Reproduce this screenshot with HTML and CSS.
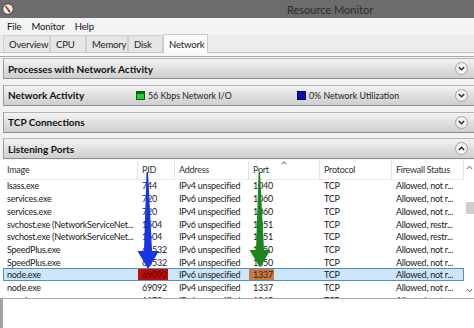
FILE: index.html
```html
<!DOCTYPE html>
<html lang="en">
<head>
    <meta charset="UTF-8">
    <meta name="viewport" content="width=device-width, initial-scale=1.0">
    <title>Resource Monitor</title>
    <link rel="stylesheet" href="styles.css">
</head>
<body>

    <!-- Title bar -->
    <div class="titlebar">
        <svg class="app-icon" width="12" height="12" viewBox="0 0 12 12">
            <circle cx="6" cy="6" r="5.3" fill="#f4efe6" stroke="#4a3a30" stroke-width="1"/>
            <line x1="3.5" y1="3" x2="7.5" y2="8.5" stroke="#c0271e" stroke-width="1.6"/>
            <circle cx="7.5" cy="8.5" r="1" fill="#7a1a12"/>
        </svg>
        <span class="title">Resource Monitor</span>
    </div>

    <!-- Menu -->
    <div class="menubar">
        <span class="menu-item">File</span>
        <span class="menu-item">Monitor</span>
        <span class="menu-item">Help</span>
    </div>

    <!-- Tabs -->
    <div class="tabs">
        <span class="tab tab-overview">Overview</span>
        <span class="tab tab-cpu">CPU</span>
        <span class="tab tab-memory">Memory</span>
        <span class="tab tab-disk">Disk</span>
        <span class="tab tab-network active">Network</span>
    </div>
    <div class="tab-rule"></div>

    <div class="content">
        <div class="section-head">
            <span class="section-title">Processes with Network Activity</span>
            <span class="toggle"><svg width="7" height="5" viewBox="0 0 7 5"><polyline points="0.8,1 3.5,3.8 6.2,1" fill="none" stroke="#222" stroke-width="1.3"/></svg></span>
        </div>

        <div class="section-head">
            <span class="section-title">Network Activity</span>
            <span class="legend legend-io"><i class="swatch green"></i>56 Kbps Network I/O</span>
            <span class="legend legend-util"><i class="swatch blue"></i>0% Network Utilization</span>
            <span class="toggle"><svg width="7" height="5" viewBox="0 0 7 5"><polyline points="0.8,1 3.5,3.8 6.2,1" fill="none" stroke="#222" stroke-width="1.3"/></svg></span>
        </div>

        <div class="section-head">
            <span class="section-title">TCP Connections</span>
            <span class="toggle"><svg width="7" height="5" viewBox="0 0 7 5"><polyline points="0.8,1 3.5,3.8 6.2,1" fill="none" stroke="#222" stroke-width="1.3"/></svg></span>
        </div>

        <div class="section-head">
            <span class="section-title">Listening Ports</span>
            <span class="toggle"><svg width="7" height="5" viewBox="0 0 7 5"><polyline points="0.8,4 3.5,1.2 6.2,4" fill="none" stroke="#222" stroke-width="1.3"/></svg></span>
        </div>

        <!-- Listening ports list -->
        <div class="ports">
            <div class="list">
                <div class="row head">
                    <span class="cell">Image</span>
                    <span class="cell">PID</span>
                    <span class="cell">Address</span>
                    <span class="cell sorted">Port</span>
                    <span class="cell">Protocol</span>
                    <span class="cell">Firewall Status</span>
                </div>
                <div class="row">
                    <span class="cell">lsass.exe</span><span class="cell">744</span><span class="cell">IPv4 unspecified</span><span class="cell">1040</span><span class="cell">TCP</span><span class="cell">Allowed, not r...</span>
                </div>
                <div class="row">
                    <span class="cell">services.exe</span><span class="cell">720</span><span class="cell">IPv6 unspecified</span><span class="cell">1060</span><span class="cell">TCP</span><span class="cell">Allowed, not r...</span>
                </div>
                <div class="row">
                    <span class="cell">services.exe</span><span class="cell">720</span><span class="cell">IPv4 unspecified</span><span class="cell">1060</span><span class="cell">TCP</span><span class="cell">Allowed, not r...</span>
                </div>
                <div class="row">
                    <span class="cell">svchost.exe (NetworkServiceNet...</span><span class="cell">1504</span><span class="cell">IPv6 unspecified</span><span class="cell">1051</span><span class="cell">TCP</span><span class="cell">Allowed, restr...</span>
                </div>
                <div class="row">
                    <span class="cell">svchost.exe (NetworkServiceNet...</span><span class="cell">1504</span><span class="cell">IPv4 unspecified</span><span class="cell">1051</span><span class="cell">TCP</span><span class="cell">Allowed, restr...</span>
                </div>
                <div class="row">
                    <span class="cell">SpeedPlus.exe</span><span class="cell">65532</span><span class="cell">IPv6 unspecified</span><span class="cell">1050</span><span class="cell">TCP</span><span class="cell">Allowed, not r...</span>
                </div>
                <div class="row">
                    <span class="cell">SpeedPlus.exe</span><span class="cell">65532</span><span class="cell">IPv4 unspecified</span><span class="cell">1050</span><span class="cell">TCP</span><span class="cell">Allowed, not r...</span>
                </div>
                <div class="row selected">
                    <span class="cell">node.exe</span><span class="cell"><b class="mark pid">69092</b></span><span class="cell">IPv6 unspecified</span><span class="cell"><b class="mark port">1337</b></span><span class="cell">TCP</span><span class="cell">Allowed, not r...</span>
                </div>
                <div class="row">
                    <span class="cell">node.exe</span><span class="cell">69092</span><span class="cell">IPv4 unspecified</span><span class="cell">1337</span><span class="cell">TCP</span><span class="cell">Allowed, not r...</span>
                </div>
                <div class="row">
                    <span class="cell">spoolsv.exe</span><span class="cell">1172</span><span class="cell">IPv6 unspecified</span><span class="cell">1345</span><span class="cell">TCP</span><span class="cell">Allowed, not r...</span>
                </div>
            </div>
            <div class="scrollbar">
                <svg width="7" height="5" viewBox="0 0 7 5"><polyline points="0.8,4 3.5,1.2 6.2,4" fill="none" stroke="#555" stroke-width="1"/></svg>
                <div class="thumb"></div>
                <svg class="down" width="7" height="5" viewBox="0 0 7 5"><polyline points="0.8,1 3.5,3.8 6.2,1" fill="none" stroke="#555" stroke-width="1"/></svg>
            </div>
        </div>
        <div class="pane-bottom"></div>
    </div>

    <!-- Hand-drawn arrows over the list -->
    <svg class="arrows" width="474" height="328" viewBox="0 0 474 328">
        <polygon points="146.5,172 148,172 152,251 159,251 148,269 137.5,251 144,251" fill="#1536e2"/>
        <polygon points="258.6,172 260,172 264,250 270.5,250 260,267.5 249.5,250 256,250" fill="#1c861c"/>
    </svg>

</body>
</html>
```

FILE: styles.css
```css
/* General */
* {
    margin: 0;
    padding: 0;
    box-sizing: border-box;
}

body {
    width: 474px;
    height: 328px;
    overflow: hidden;
    background-color: #fff;
    font-family: 'Lato', 'Noto Sans', sans-serif;
    font-size: 9px;
    letter-spacing: -0.25px;
    color: #1a1a1a;
    position: relative;
}

/* Title bar */
.titlebar {
    height: 18px;
    background-color: #6c6c6c;
    display: flex;
    align-items: center;
    padding-left: 2px;
}

.app-icon {
    display: block;
}

.title {
    margin-left: 273px;
    font-size: 11px;
    letter-spacing: 0;
    color: #2c2c2c;
}

/* Menu */
.menubar {
    height: 17px;
    background-color: #f3f4f6;
    display: flex;
    align-items: center;
    padding-left: 7px;
    gap: 10px;
    font-size: 9.5px;
    letter-spacing: -0.1px;
    color: #111;
}

/* Tabs */
.tabs {
    height: 18px;
    background-color: #ececec;
    display: flex;
    align-items: flex-end;
    padding-left: 3px;
    border-bottom: 1px solid #c4c4c4;
}

.tab {
    height: 17px;
    display: flex;
    align-items: center;
    padding-left: 5px;
    background-color: #e6e6e6;
    border: 1px solid #cfcfcf;
    border-bottom: none;
    font-size: 9.5px;
    letter-spacing: -0.15px;
    color: #222;
    white-space: nowrap;
}

.tab-overview { width: 47px; }
.tab-cpu { width: 36px; }
.tab-memory { width: 42px; }
.tab-disk { width: 35px; }

.tab.active {
    width: 45px;
    height: 19px;
    margin-bottom: -1px;
    background-color: #fbfbfb;
    border-color: #c8c8c8;
}

.tab-rule {
    height: 4px;
    background-color: #f7f7f7;
    border-bottom: 1px solid #a9a9a9;
}

/* Sections */
.content {
    display: flex;
    flex-direction: column;
    gap: 5.7px;
    padding-top: 1.3px;
    padding-left: 3px;
    background-color: #f2f2f2;
}

.section-head {
    height: 21px;
    display: flex;
    align-items: center;
    padding-left: 4px;
    background: linear-gradient(#f3f3f3, #dedede 55%, #cfcfcf);
    border-top: 1px solid #b4b4b4;
    border-bottom: 1px solid #8f8f8f;
    border-left: 1px solid #9a9a9a;
    position: relative;
}

.section-title {
    font-weight: bold;
    font-size: 10px;
    letter-spacing: 0;
    color: #111;
}

.legend {
    position: absolute;
    top: 4px;
    display: flex;
    align-items: center;
    gap: 3px;
    font-size: 8.8px;
    letter-spacing: 0;
    color: #222;
}

.legend-io { left: 132px; }
.legend-util { left: 293px; }

.swatch {
    width: 9px;
    height: 9px;
    display: inline-block;
}

.swatch.green {
    background: linear-gradient(#0f6a10 0 35%, #22d422 35%);
    border: 1px solid #0c5d0c;
}

.swatch.blue {
    background-color: #0c0cbf;
    border: 1px solid #05056f;
}

.toggle {
    position: absolute;
    right: 6px;
    top: 3px;
    width: 13px;
    height: 13px;
    border-radius: 50%;
    border: 1px solid #a6a6a6;
    background: radial-gradient(#ffffff, #e6e6e6);
    display: flex;
    align-items: center;
    justify-content: center;
}

.toggle svg {
    display: block;
}

/* Listening ports list */
.ports {
    display: flex;
    height: 139px;
    background-color: #fff;
    margin-left: -3px;
    padding-left: 3px;
    margin-top: -5px;
    border-bottom: 1px solid #a8a8a8;
    overflow: hidden;
}

.pane-bottom {
    height: 30px;
    margin-left: -3px;
    margin-top: -5.7px;
    border-left: 3px solid #a3a3a3;
    background-color: #fff;
}

.list {
    width: 461px;
}

.row {
    display: grid;
    grid-template-columns: 135px 37px 74px 71px 72px 72px;
    height: 12.7px;
    align-items: center;
    white-space: nowrap;
}

.row.head {
    height: 19.6px;
    padding-top: 1px;
    color: #333;
    border-bottom: 1px solid #ececec;
}

.row.head .cell {
    border-right: 1px solid #e3e3e3;
    height: 100%;
    display: flex;
    align-items: center;
}

.row.head .sorted {
    position: relative;
}

.row.head .sorted::before {
    content: "";
    position: absolute;
    left: 33px;
    top: 1px;
    width: 3px;
    height: 3px;
    border-left: 1px solid #7a8a9a;
    border-top: 1px solid #7a8a9a;
    transform: rotate(45deg);
}

.cell {
    padding-left: 4px;
    min-width: 0;
    overflow: hidden;
    text-overflow: clip;
}

.row.selected {
    background-color: #cce6f7;
    outline: 1px solid #4f8fc4;
    outline-offset: -1px;
}

.mark {
    font-weight: normal;
    display: inline-block;
    margin-left: -4px;
    padding: 0 4px;
    line-height: 11px;
}

.mark.pid {
    background-color: #c20c08;
    color: #5a0000;
    width: 30px;
}

.mark.port {
    background-color: #c97a42;
    color: #3a1a05;
    width: 25px;
}

.scrollbar {
    width: 10px;
    background-color: #fff;
    display: flex;
    flex-direction: column;
    align-items: center;
    padding-top: 5px;
}

.scrollbar .thumb {
    width: 8px;
    height: 12px;
    margin-top: 32px;
    margin-left: 2px;
    background-color: #cdcdcd;
}

.scrollbar .down {
    margin-top: 74px;
}

/* Arrows */
.arrows {
    position: absolute;
    left: 0;
    top: 0;
    pointer-events: none;
}
```
